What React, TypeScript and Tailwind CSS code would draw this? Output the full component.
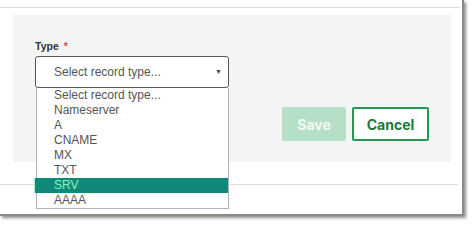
import React from 'react';

const options = ['Select record type...', 'Nameserver', 'A', 'CNAME', 'MX', 'TXT', 'SRV', 'AAAA'];

const App: React.FC = () => {
  const active = 'SRV';

  return (
    <div className="w-[474px] h-[228px] bg-white overflow-hidden font-['Liberation_Sans',Arial,sans-serif]">
      <div className="w-[464px] h-[216px] bg-white border-r-2 border-b-2 border-[#8a8a8a] shadow-[2px_2px_3px_rgba(0,0,0,0.45)] flex flex-col">
        <div className="h-[8px] border-b border-[#dcdcdc] mr-[2px]" />
        <div className="mt-[7px] ml-[13px] w-[438px] h-[147px] bg-[#f4f4f4] pl-[22px] pr-[22px] pt-[25px] flex flex-col">
          <label className="text-[10.5px] leading-[13px] font-bold text-[#333] h-[16px]">
            Type <span className="text-[#e0474c] ml-[2px]">*</span>
          </label>
          <div className="relative w-[194px]">
            <div className="h-[32px] border border-[#555] rounded-[3px] bg-white flex items-center pl-[18px] pr-[6px] text-[12px] text-[#555]">
              <span className="flex-1">Select record type...</span>
              <span className="text-[7px] text-[#444]">▼</span>
            </div>
            <ul className="absolute left-[1px] top-full w-[193px] bg-white border border-[#a9b3c6] border-t-0 z-10">
              {options.map(o => (
                <li
                  key={o}
                  className={
                    o === active
                      ? 'h-[15px] leading-[15px] text-[12px] pl-[17px] bg-[#0f8a78] text-[#8cf0bd] -ml-[2px] pl-[19px] shadow-[-1px_0_0_#9ff5c3]'
                      : 'h-[15px] leading-[15px] text-[12px] pl-[17px] text-[#555]'
                  }
                >
                  {o}
                </li>
              ))}
            </ul>
          </div>
          <div className="mt-[19px] flex justify-end gap-[6px] font-['Inter',sans-serif] font-bold text-[14px]">
            <button className="w-[64px] h-[34px] rounded-[2px] bg-[#b5dfc6] text-[#f2faf5]">Save</button>
            <button className="w-[77px] h-[34px] rounded-[2px] border-2 border-[#1f9a52] bg-white text-[#1a7a3c]">Cancel</button>
          </div>
        </div>
        <div className="mt-[22px] border-b border-[#dcdcdc] mr-[4px]" />
      </div>
    </div>
  );
};

export default App;
